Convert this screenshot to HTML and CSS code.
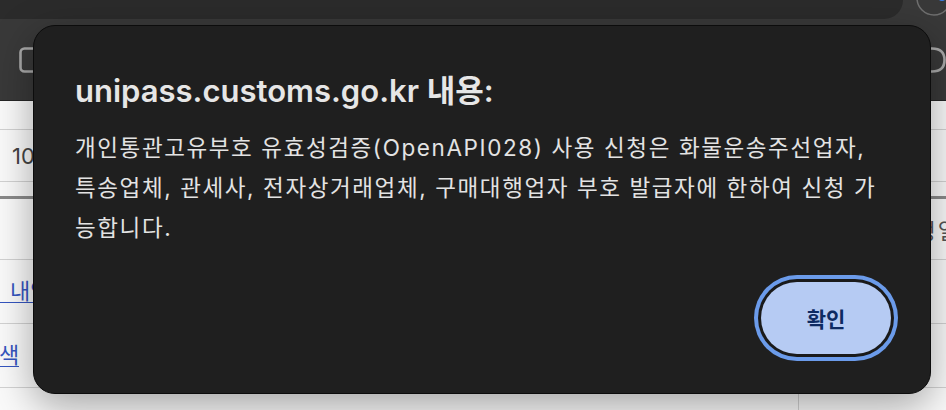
FILE: index.html
```html
<!DOCTYPE html>
<html lang="ko">
<head>
    <meta charset="UTF-8">
    <meta name="viewport" content="width=device-width, initial-scale=1.0">
    <title>unipass.customs.go.kr</title>
    <link rel="stylesheet" href="styles.css">
</head>
<body>
    <div class="browser">
        <div class="tabstrip">
            <div class="omnibox"></div>
            <svg class="avatar" width="40" height="20" viewBox="0 0 40 20">
                <circle cx="28" cy="-2" r="17" fill="none" stroke="#6f6f6f" stroke-width="1.5"/>
                <circle cx="36" cy="-4" r="5" fill="#3b7de8"/>
            </svg>
        </div>
        <div class="toolbar">
            <svg class="tb-icon" width="24" height="26" viewBox="0 0 24 26">
                <rect x="1.5" y="1.5" width="21" height="23" rx="4" fill="none" stroke="#a9a9a9" stroke-width="2.6"/>
            </svg>
            <svg class="tb-icon" width="24" height="26" viewBox="0 0 24 26">
                <path d="M1.5 1.5 H10 Q22.5 1.5 22.5 13 Q22.5 24.5 10 24.5 H1.5 Z" fill="none" stroke="#a9a9a9" stroke-width="2.6" stroke-linejoin="round"/>
            </svg>
        </div>

        <main class="page">
            <div class="row row-top"></div>
            <div class="row row-count"><span class="count">10</span></div>
            <div class="thick-rule"></div>
            <div class="row row-head">
                <span class="head-cell">신청</span>
                <span class="head-cell">일</span>
            </div>
            <div class="row row-link"><a class="link link-first" href="#">내역</a></div>
            <div class="row row-link"><a class="link link-second" href="#">색</a></div>
            <div class="row row-last"><div class="cell"></div></div>
        </main>
    </div>

    <div class="dialog" role="alertdialog">
        <h1 class="dialog-title">unipass.customs.go.kr 내용:</h1>
        <p class="dialog-message">개인통관고유부호 유효성검증(OpenAPI028) 사용 신청은 화물운송주선업자, 특송업체, 관세사, 전자상거래업체, 구매대행업자 부호 발급자에 한하여 신청 가능합니다.</p>
        <div class="dialog-actions">
            <button class="btn-ok" type="button">확인</button>
        </div>
    </div>
</body>
</html>
```

FILE: styles.css
```css
/* styles.css */

body {
    margin: 0;
    width: 946px;
    height: 410px;
    overflow: hidden;
    font-family: "Inter", "Noto Sans CJK KR", sans-serif;
    background-color: #fff;
    position: relative;
}

/* browser chrome behind the dialog */

.tabstrip {
    height: 20px;
    background-color: #393939;
    display: flex;
    align-items: flex-start;
}

.omnibox {
    width: 903px;
    height: 19px;
    background-color: #2b2b2b;
    border-radius: 0 0 20px 0;
}

.avatar {
    margin-left: 3px;
}

.toolbar {
    height: 81px;
    background-color: #393939;
    border-bottom: 1px solid #262626;
    display: flex;
    justify-content: space-between;
    align-items: flex-start;
    padding: 27px 0 0 19px;
    box-sizing: border-box;
}

.tb-icon {
    display: block;
}

/* page content */

.page {
    background-color: #fafafa;
    color: #444;
    font-size: 22px;
}

.row {
    border-bottom: 1px solid #d2d2d2;
    display: flex;
    align-items: center;
    box-sizing: border-box;
}

.row-top {
    height: 29px;
}

.row-count {
    height: 52px;
}

.count {
    padding-left: 12px;
}

.thick-rule {
    height: 3px;
    margin-top: 14px;
    background-color: #8a8a8a;
}

.row-head {
    height: 61px;
    justify-content: flex-end;
    color: #555;
}

.head-cell:first-child {
    margin-right: 2px;
}

.head-cell:last-child {
    margin-right: -12px;
}

.row-link {
    height: 64px;
}

.link {
    color: #3556c0;
    text-decoration: none;
    border-bottom: 1.5px solid #3556c0;
    line-height: 22px;
}

.link-first {
    padding-left: 10px;
}

.link-second {
    margin-left: -1px;
}

.row-last {
    height: 40px;
    border-bottom: none;
    align-items: stretch;
}

.row-last .cell {
    width: 798px;
    border-right: 1px solid #d2d2d2;
}

/* javascript alert dialog */

.dialog {
    position: absolute;
    top: 25px;
    left: 33px;
    width: 898px;
    height: 369px;
    box-sizing: border-box;
    padding: 47px 39px 39px 41px;
    background-color: #1f1f1f;
    border: 1px solid #0c0c0c;
    border-radius: 22px;
    box-shadow: 0 12px 40px rgba(0, 0, 0, 0.35);
    color: #e3e3e3;
    display: flex;
    flex-direction: column;
}

.dialog-title {
    margin: 0;
    font-size: 31px;
    font-weight: 600;
    line-height: 36px;
    color: #e6e6e6;
}

.dialog-message {
    width: 815px;
    margin: 19px 0 0 0;
    font-size: 22.5px;
    letter-spacing: 1.6px;
    line-height: 40px;
    color: #e3e3e3;
}

.dialog-actions {
    margin-top: auto;
    display: flex;
    justify-content: flex-end;
}

.btn-ok {
    width: 130px;
    height: 72px;
    border: none;
    border-radius: 36px;
    background-color: #b6cbf3;
    color: #0d2a62;
    font-family: "Noto Sans CJK KR", sans-serif;
    font-size: 21px;
    font-weight: 700;
    box-shadow: 0 0 0 3px #1a1a1a, 0 0 0 7px #6b9bea;
    cursor: pointer;
}
```
